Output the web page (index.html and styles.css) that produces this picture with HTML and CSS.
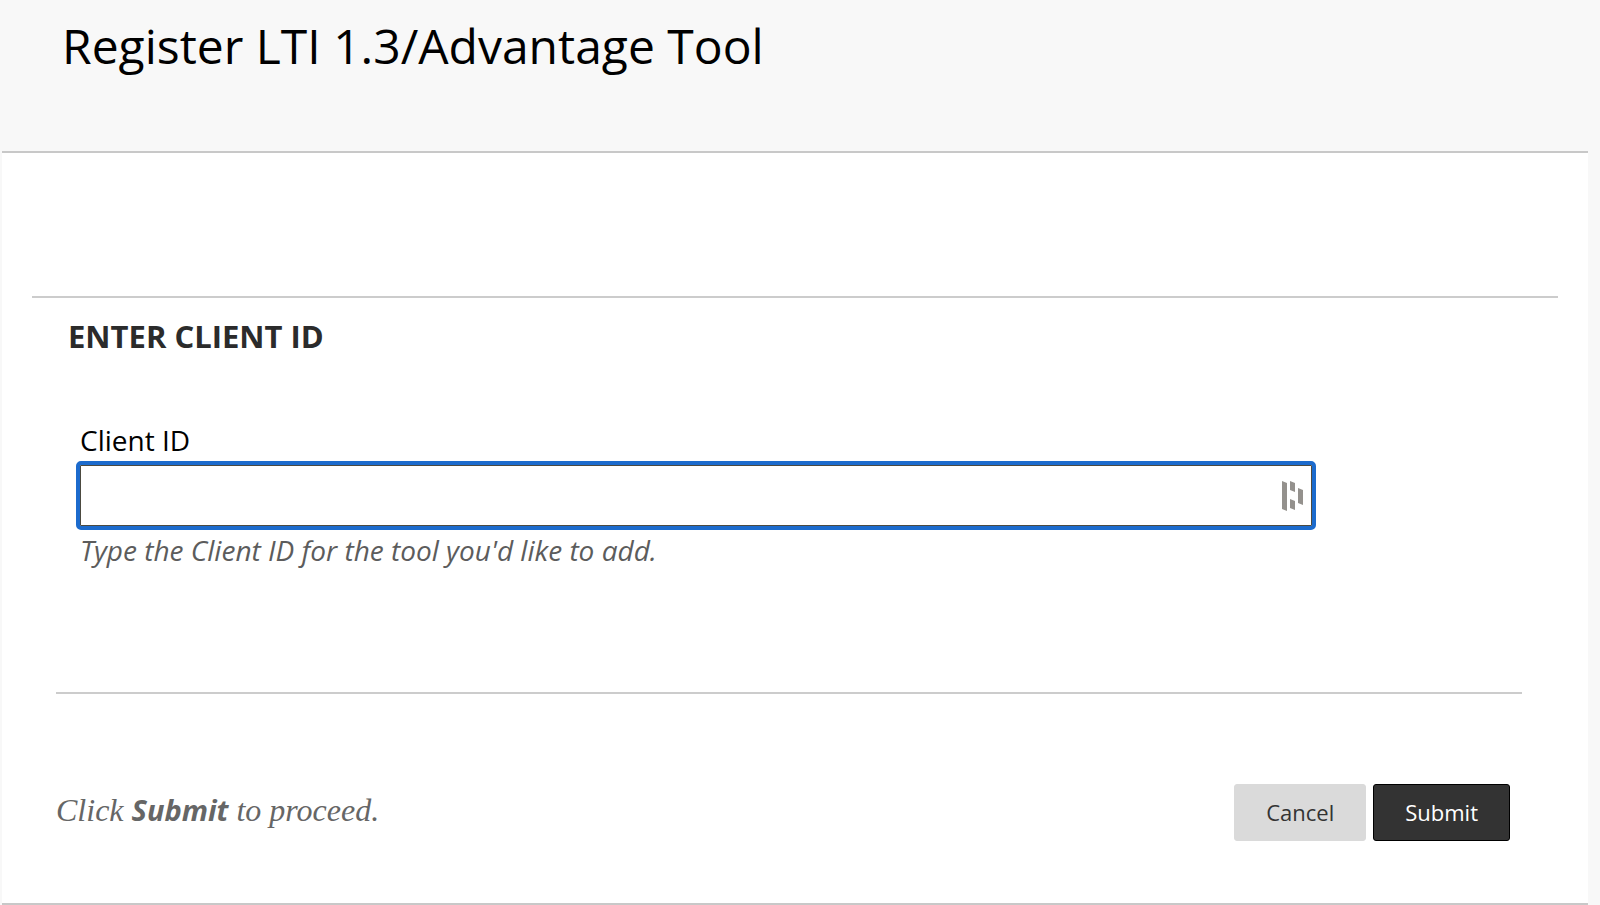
FILE: index.html
```html
<!DOCTYPE html>
<html lang="en">

<head>
    <meta charset="utf-8">
    <title>Register LTI 1.3/Advantage Tool</title>
    <link rel="stylesheet" href="styles.css">
</head>

<body>
    <header class="page-header">
        <h1>Register LTI 1.3/Advantage Tool</h1>
    </header>
    <main class="content">
        <form>
            <section class="step">
                <h2>Enter Client ID</h2>
                <div class="field">
                    <label for="client-id">Client ID</label>
                    <div class="input-wrap">
                        <input type="text" id="client-id" name="client-id" aria-describedby="client-id-help">
                        <svg class="input-icon" viewBox="0 0 22 30" aria-hidden="true">
                            <path d="M0 0 L5 2 V30 L0 28 Z M8 0 L13 2 V11 L8 9 Z M8 18 L13 20 V29 L8 27 Z M16 7 L21 9 V24 L16 22 Z" />
                        </svg>
                    </div>
                    <p class="help" id="client-id-help">Type the Client ID for the tool you'd like to add.</p>
                </div>
            </section>
            <div class="submit-step">
                <p class="proceed">Click <strong>Submit</strong> to proceed.</p>
                <div class="buttons">
                    <button type="button" class="cancel">Cancel</button>
                    <button type="submit" class="submit">Submit</button>
                </div>
            </div>
        </form>
    </main>
</body>

</html>
```
FILE: styles.css
```css
* {
    box-sizing: border-box;
}

body {
    margin: 0;
    background-color: #f8f8f8;
    color: #000;
    font-family: "Open Sans", sans-serif;
    font-size: 28px;
    line-height: 40px;
}

h1, h2, p {
    margin: 0;
}

.page-header {
    padding: 14px 62px 73px;
}

h1 {
    font-size: 48px;
    font-weight: 400;
    line-height: 64px;
}

.content {
    margin: 0 12px 0 2px;
    padding-top: 143px;
    background-color: #fff;
    border-top: 2px solid #c8c8c8;
    border-bottom: 2px solid #c8c8c8;
}

.step {
    margin: 0 30px;
    padding: 18px 36px 0;
    border-top: 2px solid #ccc;
}

h2 {
    color: #2b2b2b;
    font-size: 31px;
    font-weight: 700;
    text-transform: uppercase;
}

.field {
    margin: 64px 206px 0 8px;
}

.field label {
    display: block;
    padding: 0 4px 1px;
}

.input-wrap {
    position: relative;
    display: flex;
}

.input-wrap input {
    flex: 1;
    height: 69px;
    padding: 0 60px 0 12px;
    border: 4px solid #1c6bcd;
    border-radius: 5px;
    box-shadow: inset 0 0 0 1px #4c4a40;
    background-color: #fff;
    font: inherit;
    outline: none;
}

.input-icon {
    position: absolute;
    top: 20px;
    right: 12px;
    width: 22px;
    height: 30px;
    fill: #94918d;
}

.help {
    padding: 0 4px;
    color: #5c5c5c;
    font-style: italic;
}

.submit-step {
    display: flex;
    justify-content: space-between;
    align-items: center;
    margin: 122px 66px 0 54px;
    padding: 90px 12px 62px 0;
    border-top: 2px solid #ccc;
}

.proceed {
    padding-bottom: 6px;
    color: #666;
    font-family: Georgia, "Liberation Serif", serif;
    font-size: 32px;
    font-style: italic;
}

.proceed strong {
    font-family: "Open Sans", sans-serif;
    font-size: 29px;
}

.buttons {
    display: flex;
    gap: 7px;
}

.buttons button {
    height: 57px;
    padding: 0 31px 2px;
    border: 1px solid #dadada;
    border-radius: 3px;
    background-color: #dadada;
    color: #333;
    font-family: inherit;
    font-size: 22px;
}

.buttons .submit {
    border-color: #000;
    background-color: #333;
    color: #fff;
}
```
